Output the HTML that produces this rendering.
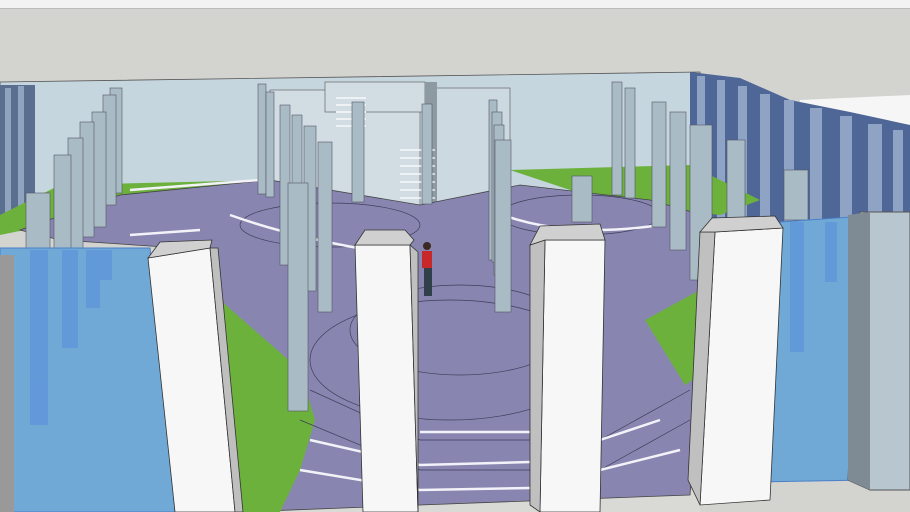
<!DOCTYPE html>
<html><head><style>html,body{margin:0;padding:0;width:910px;height:512px;overflow:hidden;background:#d3d3d0}</style></head>
<body>
<svg width="910" height="512" viewBox="0 0 910 512" xmlns="http://www.w3.org/2000/svg">
<rect x="0" y="0" width="910" height="512" fill="#d3d3d0"/>
<rect x="0" y="0" width="910" height="8" fill="#f2f2f2"/>
<rect x="0" y="8" width="910" height="1" fill="#bbb"/>
<rect x="230" y="490" width="470" height="22" fill="#d9d9d6"/>
<!-- back wall -->
<polygon points="0,82 700,72 700,200 0,215" fill="#c6d6df" stroke="#555" stroke-width="0.8"/>
<polygon points="780,170 800,100 910,95 910,170" fill="#f6f6f6"/>
<!-- central building -->
<rect x="270" y="90" width="150" height="120" fill="#d2dde3" stroke="#666" stroke-width="0.7"/>
<rect x="325" y="82" width="100" height="30" fill="#d2dde3" stroke="#666" stroke-width="0.7"/>
<rect x="435" y="88" width="75" height="120" fill="#ccd9e0" stroke="#666" stroke-width="0.7"/>
<rect x="425" y="82" width="12" height="125" fill="#8d9aa2"/>
<g stroke="#fff" stroke-width="1.2"><line x1="336" y1="98" x2="366" y2="98"/><line x1="336" y1="105" x2="366" y2="105"/><line x1="336" y1="112" x2="366" y2="112"/><line x1="336" y1="119" x2="366" y2="119"/><line x1="336" y1="126" x2="366" y2="126"/>
<line x1="400" y1="150" x2="435" y2="150"/><line x1="400" y1="158" x2="435" y2="158"/><line x1="400" y1="166" x2="435" y2="166"/><line x1="400" y1="174" x2="435" y2="174"/><line x1="400" y1="182" x2="435" y2="182"/><line x1="400" y1="190" x2="435" y2="190"/><line x1="400" y1="198" x2="435" y2="198"/></g>
<!-- right blue columns wall -->
<polygon points="690,72 740,78 790,100 850,112 910,125 910,230 690,220" fill="#4f6796"/>
<g fill="#8fa4c4"><rect x="697" y="76" width="8" height="145"/><rect x="717" y="80" width="8" height="140"/><rect x="738" y="86" width="9" height="135"/><rect x="760" y="94" width="10" height="127"/><rect x="784" y="100" width="10" height="122"/><rect x="810" y="108" width="12" height="115"/><rect x="840" y="116" width="12" height="110"/><rect x="868" y="124" width="14" height="105"/><rect x="893" y="130" width="10" height="100"/></g>
<rect x="0" y="85" width="35" height="140" fill="#5a6e90"/><rect x="5" y="88" width="6" height="135" fill="#90a4c0"/><rect x="18" y="86" width="6" height="130" fill="#90a4c0"/>
<!-- grass -->
<polygon points="0,215 60,185 270,180 0,235" fill="#6cb13c"/>
<polygon points="510,170 690,165 760,200 720,215 600,200" fill="#6cb13c"/>
<!-- floor -->
<polygon points="20,230 120,195 270,180 420,205 520,185 650,200 720,220 705,300 690,495 420,505 240,512 220,300 210,250 60,240" fill="#8886b0" stroke="#444" stroke-width="0.8"/>
<polygon points="220,300 300,370 315,420 300,470 280,512 235,512" fill="#6cb13c"/>
<polygon points="645,320 700,290 700,375 685,385" fill="#6cb13c"/>
<g fill="none" stroke="#3e3e5a" stroke-width="0.7">
<ellipse cx="450" cy="360" rx="140" ry="60"/><ellipse cx="460" cy="330" rx="110" ry="45"/>
<ellipse cx="330" cy="225" rx="90" ry="22"/><ellipse cx="580" cy="215" rx="80" ry="20"/>
<path d="M310,390 L420,440 L600,440 L690,390"/><path d="M300,420 L420,470 L600,470 L690,420"/>
</g>
<g stroke="#f2f2f8" stroke-width="2.5" fill="none">
<path d="M310,440 L420,465 L530,462"/><path d="M300,470 L420,490 L530,488"/><path d="M600,440 L660,420"/><path d="M600,470 L680,450"/>
<path d="M420,432 L530,432"/><path d="M130,235 L200,230"/><path d="M230,215 Q300,240 400,255"/><path d="M490,210 Q560,240 660,225"/>
<path d="M130,190 L260,180"/></g>
<!-- cylinders -->
<g fill="#a9bcc6" stroke="#556" stroke-width="0.6">
<rect x="110" y="88" width="12" height="105"/><rect x="103" y="95" width="13" height="110"/><rect x="92" y="112" width="14" height="115"/><rect x="80" y="122" width="14" height="115"/><rect x="68" y="138" width="15" height="110"/><rect x="54" y="155" width="17" height="95"/><rect x="26" y="193" width="24" height="55"/>
<rect x="258" y="84" width="8" height="110"/><rect x="266" y="92" width="8" height="105"/><rect x="280" y="105" width="10" height="160"/><rect x="292" y="115" width="10" height="160"/><rect x="304" y="126" width="12" height="165"/><rect x="318" y="142" width="14" height="170"/><rect x="288" y="183" width="20" height="228"/><rect x="352" y="102" width="12" height="100"/><rect x="422" y="104" width="10" height="100"/>
<rect x="489" y="100" width="8" height="160"/><rect x="492" y="112" width="10" height="150"/><rect x="494" y="125" width="10" height="150"/><rect x="495" y="140" width="16" height="172"/>
<rect x="612" y="82" width="10" height="113"/><rect x="625" y="88" width="10" height="110"/><rect x="652" y="102" width="14" height="125"/><rect x="670" y="112" width="16" height="138"/><rect x="690" y="125" width="22" height="155"/><rect x="727" y="140" width="18" height="90"/><rect x="572" y="176" width="20" height="46"/><rect x="784" y="170" width="24" height="50"/>
</g>
<!-- water -->
<polygon points="0,248 150,248 175,512 0,512" fill="#70a9d6" stroke="#4a80c8"/>
<g fill="#5a90dc" opacity="0.6"><rect x="30" y="250" width="18" height="175"/><rect x="62" y="250" width="16" height="98"/><rect x="86" y="250" width="14" height="58"/><rect x="100" y="250" width="12" height="30"/></g>
<polygon points="780,222 880,215 868,480 755,482" fill="#70a9d6" stroke="#4a80c8"/>
<g fill="#5a90dc" opacity="0.6"><rect x="790" y="222" width="14" height="130"/><rect x="825" y="222" width="12" height="60"/><rect x="848" y="222" width="14" height="50"/></g>
<rect x="0" y="255" width="14" height="257" fill="#999"/>
<polygon points="860,212 910,212 910,490 870,490 848,480" fill="#b8c6d0" stroke="#555"/>
<polygon points="848,215 870,212 870,490 848,480" fill="#7f8b94"/>
<!-- white pillars -->
<g stroke="#333" stroke-width="0.8">
<polygon points="148,258 210,248 235,512 175,512" fill="#f7f7f7"/><polygon points="210,248 218,248 243,512 235,512" fill="#bfbfbf"/><polygon points="148,258 160,242 212,240 210,248" fill="#d0d0d0"/>
<polygon points="355,245 410,245 418,512 363,512" fill="#f7f7f7"/><polygon points="410,245 418,252 418,512" fill="#c0c0c0"/><polygon points="355,245 365,230 405,230 414,240 410,245" fill="#d0d0d0"/>
<polygon points="545,240 605,240 600,512 540,512" fill="#f7f7f7"/><polygon points="530,245 545,240 540,512 530,505" fill="#c0c0c0"/><polygon points="530,245 540,226 600,224 605,240 545,240" fill="#d0d0d0"/>
<polygon points="715,232 783,228 770,500 700,505" fill="#f7f7f7"/><polygon points="700,232 715,232 700,505 688,480" fill="#c0c0c0"/><polygon points="700,232 712,218 775,216 783,228 715,232" fill="#d0d0d0"/>
</g>
<circle cx="427" cy="246" r="4" fill="#3a2a22"/>
<rect x="422" y="251" width="10" height="17" fill="#c8282a"/>
<rect x="424" y="268" width="8" height="28" fill="#30404a"/>
</svg>
</body></html>
